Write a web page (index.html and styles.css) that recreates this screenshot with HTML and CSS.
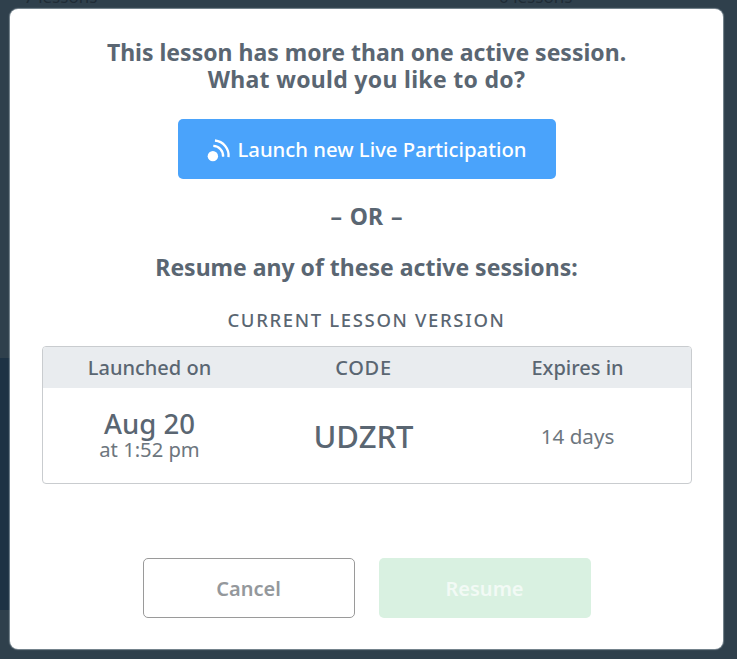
FILE: index.html
```html
<!DOCTYPE html>
<html lang="en">
<head>
<meta charset="utf-8">
<title>Active sessions</title>
<link rel="stylesheet" href="styles.css">
</head>
<body>
<div class="backdrop">
  <span class="bg-text bg-left">7 lessons</span>
  <span class="bg-text bg-right">0 lessons</span>
  <div class="bg-dark"></div>
</div>
<main class="modal">
  <h1 class="title">This lesson has more than one active session.<br><span class="title-second">What would you like to do?</span></h1>
  <button class="launch">
    <svg class="rss" viewBox="0 0 24 24" width="25" height="25" aria-hidden="true">
      <circle cx="6.6" cy="17.4" r="5" fill="#fff"/>
      <path d="M7 7.6a9.6 9.6 0 0 1 9.4 10.4" fill="none" stroke="#fff" stroke-width="2.2"/>
      <path d="M8.6 2.4a14.6 14.6 0 0 1 13 16" fill="none" stroke="#fff" stroke-width="2.2"/>
    </svg>
    <span>Launch new Live Participation</span>
  </button>
  <div class="or">– OR –</div>
  <h2 class="resume-title">Resume any of these active sessions:</h2>
  <div class="version">CURRENT LESSON VERSION</div>
  <div class="table">
    <div class="thead">
      <div>Launched on</div>
      <div class="thead-code">CODE</div>
      <div>Expires in</div>
    </div>
    <div class="tbody">
      <div class="when"><div class="date">Aug 20</div><div class="time">at 1:52 pm</div></div>
      <div class="code">UDZRT</div>
      <div class="expires">14 days</div>
    </div>
  </div>
  <div class="actions">
    <button class="btn cancel">Cancel</button>
    <button class="btn resume">Resume</button>
  </div>
</main>
</body>
</html>
```
FILE: styles.css
```css
* { box-sizing: border-box; }
html, body { margin: 0; height: 100%; }
body {
  background: #2f404c;
  font-family: "Noto Sans", "Open Sans", sans-serif;
  color: #5a6672;
  overflow: hidden;
  position: relative;
  height: 659px;
  padding: 9px 14px 10px 10px;
}
.backdrop { position: absolute; inset: 0; }
.bg-text { position: absolute; top: -15px; font-size: 17px; color: #1f2c36; }
.bg-left { left: 24px; }
.bg-right { left: 499px; }
.bg-dark { position: absolute; left: 0; width: 10px; top: 358px; height: 252px; background: #1d3244; }
.modal {
  position: relative;
  height: 640px;
  background: #fff;
  border-radius: 8px;
  box-shadow: 0 0 1px 1px rgba(190, 200, 208, 0.55);
  display: flex;
  flex-direction: column;
  align-items: center;
  padding-top: 30px;
}
.title {
  margin: 0;
  font-size: 23px;
  line-height: 27px;
  font-weight: 700;
  text-align: center;
}
.title-second { letter-spacing: 0.3px; }
.launch {
  margin-top: 26px;
  width: 378px;
  height: 60px;
  border: 0;
  border-radius: 5px;
  background: #4aa3fb;
  color: #fff;
  font: 500 20.3px "Noto Sans", sans-serif;
  display: flex;
  align-items: center;
  justify-content: center;
  gap: 6px;
}
.rss { flex: none; margin-top: 3px; }
.or { margin-top: 23px; font-size: 23px; line-height: 28px; font-weight: 700; word-spacing: 2px; }
.resume-title { margin: 23px 0 0; font-size: 23px; line-height: 28px; font-weight: 700; }
.version { margin-top: 27px; font-size: 18.5px; line-height: 24px; letter-spacing: 1.65px; font-weight: 500; }
.table {
  margin-top: 14px;
  width: 650px;
  height: 138px;
  border: 1px solid #c9cccf;
  border-radius: 4px;
  overflow: hidden;
}
.thead, .tbody { display: grid; grid-template-columns: repeat(3, 214px); text-align: center; align-items: center; }
.thead { height: 41px; background: #e9ecef; font-size: 20px; font-weight: 500; }
.thead-code { letter-spacing: 0.7px; }
.tbody { height: 95px; }
.when { display: flex; flex-direction: column; }
.date { font-size: 27.5px; line-height: 27px; font-weight: 500; }
.time { font-size: 20.2px; line-height: 24px; color: #6d767e; }
.code { font-size: 31px; font-weight: 500; }
.expires { font-size: 20.6px; color: #6d767e; }
.actions { margin-top: 74px; display: flex; gap: 24px; }
.btn {
  width: 212px;
  height: 60px;
  border-radius: 5px;
  font: 600 20px "Noto Sans", sans-serif;
}
.cancel { background: #fff; border: 1.5px solid #9a9a9a; color: #94989c; }
.resume { background: #d9f1e1; border: 0; color: #f2faf5; }
```
